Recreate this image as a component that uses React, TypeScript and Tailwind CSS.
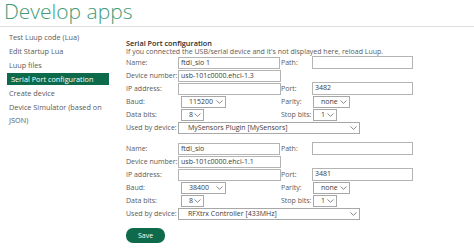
import React from "react";

const Chevron = () => (
  <svg width="7" height="4" viewBox="0 0 7 4" className="shrink-0">
    <polyline points="0.5,0.5 3.5,3.3 6.5,0.5" fill="none" stroke="#6b6b6b" strokeWidth="0.8" />
  </svg>
);

function Input({ value, w, h = "h-[12px]" }: { value?: string; w: string; h?: string }) {
  return (
    <div className={`${w} ${h} border border-[#b4b4b4] pl-[2px] text-[#3c3c3c] leading-[10px] whitespace-nowrap overflow-hidden`}>
      {value}
    </div>
  );
}

function Select({ value, w, pl = "pl-[7px]" }: { value: string; w: string; pl?: string }) {
  return (
    <div className={`${w} h-[12px] border border-[#a8a8a8] ${pl} pr-[2px] flex items-center justify-between text-[#3c3c3c] whitespace-nowrap`}>
      <span className="leading-[10px]">{value}</span>
      <Chevron />
    </div>
  );
}

function Block({
  name,
  dev,
  port,
  baud,
  device,
}: {
  name: string;
  dev: string;
  port: string;
  baud: string;
  device: string;
}) {
  const label = "text-[#5a5a5a] leading-[13px] whitespace-nowrap";
  return (
    <div className="grid grid-cols-[52px_103px_31px_101px] auto-rows-[13px] items-center">
      <div className={label}>Name:</div>
      <Input value={name} w="w-[102px]" />
      <div className={label}>Path:</div>
      <Input w="w-[101px]" h="h-[13px]" />

      <div className={label}>Device number:</div>
      <Input value={dev} w="w-[103px]" />
      <div />
      <div />

      <div className={label}>IP address:</div>
      <Input w="w-[103px]" />
      <div className={label}>Port:</div>
      <Input value={port} w="w-[101px]" h="h-[13px]" />

      <div className={label}>Baud:</div>
      <div className="pl-[3px]">
        <Select value={baud} w="w-[45px]" />
      </div>
      <div className={label}>Parity:</div>
      <div className="pl-[1px]">
        <Select value="none" w="w-[37px]" />
      </div>

      <div className={label}>Data bits:</div>
      <div className="pl-[3px]">
        <Select value="8" w="w-[23px]" />
      </div>
      <div className={label}>Stop bits:</div>
      <div className="pl-[1px]">
        <Select value="1" w="w-[24px]" />
      </div>

      <div className={label}>Used by device:</div>
      <div className="col-span-3">
        <Select value={device} w="w-[182px]" pl="pl-[9px]" />
      </div>
    </div>
  );
}

export default function App() {
  const items = [
    "Test Luup code (Lua)",
    "Edit Startup Lua",
    "Luup files",
  ];
  return (
    <div className="w-[474px] h-[250px] bg-white overflow-hidden font-['Open_Sans',sans-serif] text-[7px]">
      <div className="h-[27px] border-b border-[#dedede] pl-[4px]">
        <div className="text-[21px] leading-[23px] font-light text-[#3f9b79] whitespace-nowrap">Develop apps</div>
      </div>
      <div className="flex">
        <div className="w-[119px] shrink-0 pt-[3px] pl-[7px] text-[#5a5a5a] text-[7.3px]">
          {items.map((t) => (
            <div key={t} className="h-[14px] leading-[14px] pl-[2px] whitespace-nowrap">
              {t}
            </div>
          ))}
          <div className="h-[14px] py-[1px]">
            <div className="w-[102px] h-[12px] leading-[12px] pl-[4px] bg-[#0d6b4b] text-white whitespace-nowrap">
              Serial Port configuration
            </div>
          </div>
          <div className="h-[14px] leading-[14px] pl-[2px] whitespace-nowrap">Create device</div>
          <div className="w-[102px] leading-[13px] pl-[2px] pt-[1px]">Device Simulator (based on JSON)</div>
        </div>
        <div className="flex-1 pt-[12px] pl-[7px]">
          <div className="font-semibold text-[7.3px] text-[#2a2a2a] leading-[9px] whitespace-nowrap">Serial Port configuration</div>
          <div className="text-[#5a5a5a] leading-[8px] whitespace-nowrap">
            If you connected the USB/serial device and it's not displayed here, reload Luup.
          </div>
          <Block
            name="ftdi_sio 1"
            dev="usb-101c0000.ehci-1.3"
            port="3482"
            baud="115200"
            device="MySensors Plugin [MySensors]"
          />
          <div className="mt-[8px]">
            <Block
              name="ftdi_sio"
              dev="usb-101c0000.ehci-1.1"
              port="3481"
              baud="38400"
              device="RFXtrx Controller [433MHz]"
            />
          </div>
          <div className="mt-[8px]">
            <div className="w-[39px] h-[15px] rounded-[7px] bg-[#0f6a4b] text-white text-[7px] leading-[15px] text-center">
              Save
            </div>
          </div>
        </div>
      </div>
    </div>
  );
}
